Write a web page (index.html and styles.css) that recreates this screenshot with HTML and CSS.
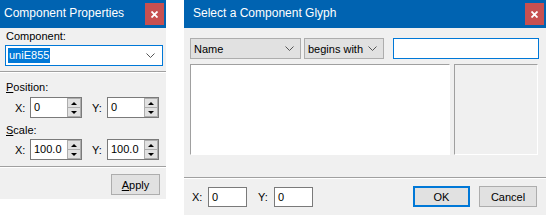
FILE: index.html
```html
<!DOCTYPE html>
<html>
<head>
<meta charset="utf-8">
<title>Component dialogs</title>
<link rel="stylesheet" href="styles.css">
</head>
<body>
<div class="win win-props">
  <div class="titlebar">
    <span class="title title-props">Component Properties</span>
    <span class="close"><svg width="7" height="7" viewBox="0 0 7 7"><path d="M0.5 0.5 L6.5 6.5 M6.5 0.5 L0.5 6.5" stroke="#fff" stroke-width="1.8" fill="none"/></svg></span>
  </div>
  <div class="pad">
    <div class="lbl lbl-comp">Component:</div>
    <div class="combo">
      <span class="sel">uniE855</span>
      <svg class="chev" width="9" height="5" viewBox="0 0 9 5"><path d="M0.5 0.5 L4.5 4.5 L8.5 0.5" stroke="#555" stroke-width="1" fill="none"/></svg>
    </div>
  </div>
  <div class="sep sep-a"></div>
  <div class="pad">
    <div class="lbl lbl-pos"><u>P</u>osition:</div>
    <div class="row row-pos">
      <span class="axis">X:</span>
      <div class="spin"><span class="val">0</span><span class="arrows"><span class="up"></span><span class="dn"></span></span></div>
      <span class="axis axis-y">Y:</span>
      <div class="spin"><span class="val">0</span><span class="arrows"><span class="up"></span><span class="dn"></span></span></div>
    </div>
    <div class="lbl lbl-scale"><u>S</u>cale:</div>
    <div class="row row-scale">
      <span class="axis">X:</span>
      <div class="spin"><span class="val">100.0</span><span class="arrows"><span class="up"></span><span class="dn"></span></span></div>
      <span class="axis axis-y">Y:</span>
      <div class="spin"><span class="val">100.0</span><span class="arrows"><span class="up"></span><span class="dn"></span></span></div>
    </div>
  </div>
  <div class="sep sep-b"></div>
  <div class="foot">
    <button class="btn apply"><u>A</u>pply</button>
  </div>
</div>

<div class="win win-glyph">
  <div class="titlebar">
    <span class="title title-glyph">Select a Component Glyph</span>
    <span class="close"><svg width="7" height="7" viewBox="0 0 7 7"><path d="M0.5 0.5 L6.5 6.5 M6.5 0.5 L0.5 6.5" stroke="#fff" stroke-width="1.8" fill="none"/></svg></span>
  </div>
  <div class="filter">
    <div class="drop drop-name"><span>Name</span><svg class="chev" width="9" height="5" viewBox="0 0 9 5"><path d="M0.5 0.5 L4.5 4.5 L8.5 0.5" stroke="#555" stroke-width="1" fill="none"/></svg></div>
    <div class="drop drop-mode"><span>begins with</span><svg class="chev" width="9" height="5" viewBox="0 0 9 5"><path d="M0.5 0.5 L4.5 4.5 L8.5 0.5" stroke="#555" stroke-width="1" fill="none"/></svg></div>
    <div class="search"></div>
  </div>
  <div class="lists">
    <div class="listbox"></div>
    <div class="preview"></div>
  </div>
  <div class="sep sep-c"></div>
  <div class="bottom">
    <span class="axis2">X:</span>
    <div class="field">0</div>
    <span class="axis2 axis2-y">Y:</span>
    <div class="field">0</div>
    <div class="spacer"></div>
    <button class="btn ok">OK</button>
    <button class="btn cancel">Cancel</button>
  </div>
</div>
</body>
</html>
```

FILE: styles.css
```css
html, body {
  margin: 0;
  padding: 0;
}
body {
  background: #fff;
  width: 546px;
  height: 215px;
  overflow: hidden;
  display: flex;
  align-items: flex-start;
  gap: 18px;
  font-family: "Liberation Sans", Arial, sans-serif;
  font-size: 11px;
  color: #000;
}
.win {
  background: #f0f0f0;
  display: flex;
  flex-direction: column;
  flex: none;
}
.win-props { width: 166px; height: 199px; }
.win-glyph { width: 362px; height: 215px; }

.titlebar {
  height: 28px;
  background: #0063b1;
  display: flex;
  justify-content: space-between;
  align-items: flex-start;
  flex: none;
}
.title {
  color: #fff;
  font-size: 12px;
  line-height: 26px;
}
.title-props { padding-left: 4px; }
.title-glyph { padding-left: 9px; }
.close {
  width: 19px;
  height: 22px;
  margin: 3px 2px 0 0;
  background: #c75050;
  display: flex;
  align-items: center;
  justify-content: center;
}

.pad { padding: 0 3px 0 5px; }
.lbl { height: 14px; line-height: 14px; padding-left: 1px; }
.lbl-comp { margin-top: 1px; }
.lbl-pos { margin-top: 7px; }
.lbl-scale { margin-top: 5px; }

.combo {
  margin-top: 2px;
  height: 21px;
  box-sizing: border-box;
  border: 1px solid #0078d7;
  background: #fff;
  display: flex;
  align-items: center;
  justify-content: space-between;
  padding: 0 7px 0 2px;
}
.sel {
  background: #0078d7;
  color: #fff;
  line-height: 15px;
  padding: 0 1px;
}

.sep {
  height: 1px;
  background: #a0a0a0;
  border-bottom: 1px solid #fff;
  flex: none;
}
.sep-a { margin-top: 5px; }
.sep-b { margin-top: 6px; }
.sep-c { margin-top: 22px; }

.row {
  display: flex;
  align-items: center;
  height: 21px;
  padding-left: 10px;
}
.row-pos { margin-top: 3px; }
.row-scale { margin-top: 2px; }
.axis { width: 15px; }
.axis-y { margin-left: 10px; }

.spin {
  width: 52px;
  height: 21px;
  box-sizing: border-box;
  border: 1px solid #7a7a7a;
  background: #fff;
  display: flex;
}
.val {
  flex: 1;
  padding-left: 3px;
  line-height: 19px;
}
.arrows {
  width: 14px;
  display: flex;
  flex-direction: column;
  background: #e1e1e1;
  box-sizing: border-box;
  border: 1px solid #adadad;
}
.up, .dn {
  flex: 1;
  display: flex;
  align-items: center;
  justify-content: center;
}
.up { border-bottom: 1px solid #adadad; }
.up::before {
  content: "";
  border-left: 3px solid transparent;
  border-right: 3px solid transparent;
  border-bottom: 3px solid #000;
}
.dn::before {
  content: "";
  border-left: 3px solid transparent;
  border-right: 3px solid transparent;
  border-top: 3px solid #000;
}

.foot {
  display: flex;
  justify-content: flex-end;
  padding: 6px 6px 0 0;
}
.btn {
  font-family: "Liberation Sans", Arial, sans-serif;
  font-size: 11px;
  color: #000;
  background: #e1e1e1;
  border: 1px solid #adadad;
  height: 21px;
  padding: 0;
  margin: 0;
  box-sizing: border-box;
}
.apply { width: 49px; }

.filter {
  display: flex;
  margin-top: 10px;
  padding-left: 6px;
  height: 21px;
}
.drop {
  box-sizing: border-box;
  height: 21px;
  background: #e1e1e1;
  border: 1px solid #adadad;
  display: flex;
  align-items: center;
  justify-content: space-between;
  padding: 0 6px 0 3px;
}
.drop-name { width: 111px; }
.drop-mode { width: 80px; margin-left: 3px; }
.search {
  width: 146px;
  height: 21px;
  box-sizing: border-box;
  margin-left: 9px;
  border: 1px solid #0078d7;
  background: #fff;
}

.lists {
  display: flex;
  margin-top: 5px;
  padding-left: 6px;
  gap: 4px;
  align-items: flex-start;
}
.listbox {
  width: 260px;
  height: 91px;
  box-sizing: border-box;
  background: #fff;
  border-top: 1px solid #a0a0a0;
  border-left: 1px solid #a0a0a0;
  border-right: 1px solid #fff;
  border-bottom: 1px solid #fff;
}
.preview {
  width: 84px;
  height: 91px;
  box-sizing: border-box;
  background: #f0f0f0;
  border-top: 1px solid #a0a0a0;
  border-left: 1px solid #a0a0a0;
  border-right: 1px solid #fff;
  border-bottom: 1px solid #fff;
}

.bottom {
  display: flex;
  align-items: center;
  margin-top: 7px;
  height: 21px;
  padding: 0 9px 0 8px;
}
.axis2 { width: 16px; }
.axis2-y { margin-left: 11px; }
.field {
  width: 39px;
  height: 20px;
  box-sizing: border-box;
  border: 1px solid #7a7a7a;
  background: #fff;
  padding-left: 3px;
  line-height: 18px;
}
.spacer { flex: 1; }
.ok {
  width: 57px;
  border: 2px solid #0078d7;
}
.cancel {
  width: 58px;
  margin-left: 9px;
}
```
